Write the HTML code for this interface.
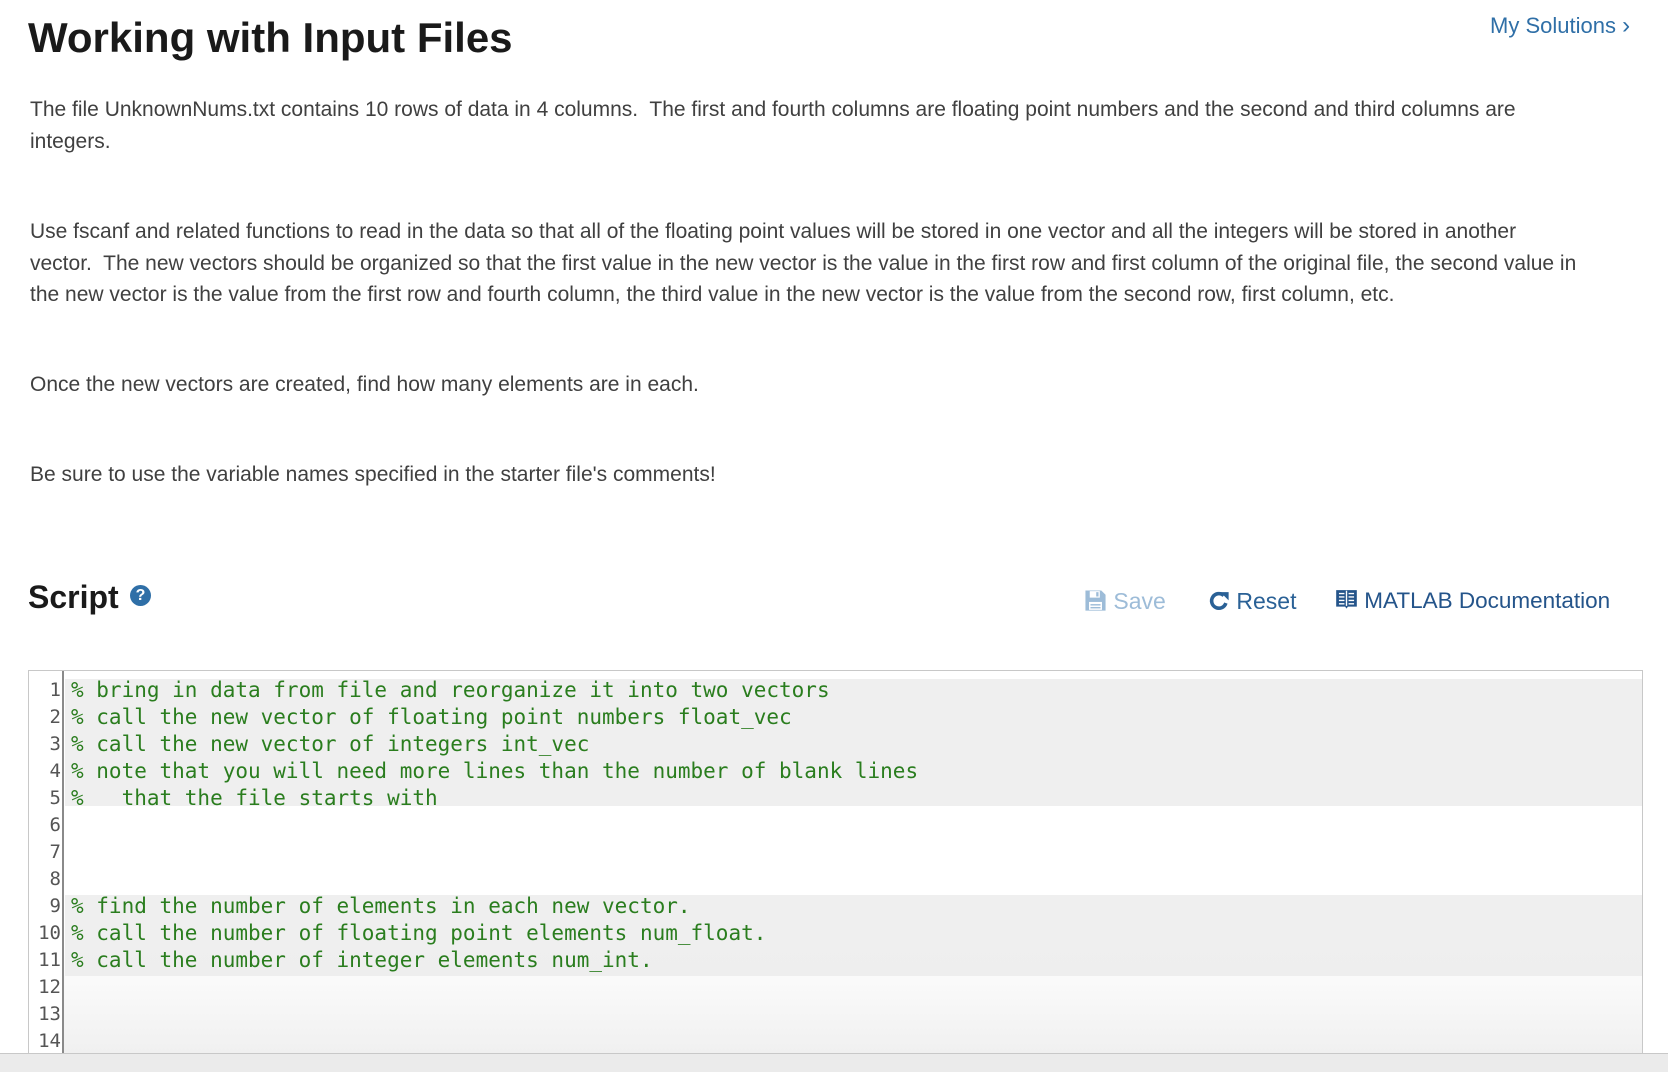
<!DOCTYPE html>
<html><head><meta charset="utf-8"><style>
*{margin:0;padding:0;box-sizing:border-box}
body{width:1668px;height:1072px;overflow:hidden;background:#fff;font-family:"Liberation Sans",Arial,sans-serif;position:relative}
.abs{position:absolute;white-space:nowrap}
h1{position:absolute;left:28px;top:12px;font-size:42px;font-weight:bold;color:#1a1a1a;line-height:52px}
.my{left:1490px;top:12px;font-size:22px;color:#2f6fa7}
.p{position:absolute;left:30px;font-size:21px;line-height:31.5px;color:#404040;white-space:nowrap}
.sc{left:28px;top:579px;font-size:32px;font-weight:bold;color:#1a1a1a}
.help{position:absolute;left:130px;top:585px;width:21px;height:21px;border-radius:50%;background:#2f6fa7;color:#fff;font-size:16px;font-weight:bold;text-align:center;line-height:21px}
.btn{top:588px;font-size:23px}
.ed{position:absolute;left:28px;top:670px;width:1615px;height:384px;border:1px solid #c8c8c8;border-bottom:none;overflow:hidden}
.gut{position:absolute;left:0;top:0;width:35px;height:100%;border-right:2px solid #8a8a8a;background:#fff}
.ln{position:absolute;right:3px;font-family:"DejaVu Sans Mono",monospace;color:#555;text-align:right}
.hl{position:absolute;left:36px;right:0;background:#efefef}
.code{position:absolute;left:42px;font-family:"DejaVu Sans Mono",monospace;font-size:21px;color:#2a7d1e;white-space:pre}
.fade{position:absolute;left:0;right:0;bottom:0;height:110px;background:linear-gradient(rgba(235,235,235,0),rgba(235,235,235,.75))}
.bot{position:absolute;left:0;top:1053px;width:1668px;height:19px;background:#ebebeb;border-top:1px solid #c8c8c8}
</style></head><body>
<h1>Working with Input Files</h1>
<div class="abs my">My Solutions <span style="font-size:24px">›</span></div>
<div class="p" style="top:94px">The file UnknownNums.txt contains 10 rows of data in 4 columns.&nbsp; The first and fourth columns are floating point numbers and the second and third columns are<br>integers.</div>
<div class="p" style="top:216px">Use fscanf and related functions to read in the data so that all of the floating point values will be stored in one vector and all the integers will be stored in another<br>vector.&nbsp; The new vectors should be organized so that the first value in the new vector is the value in the first row and first column of the original file, the second value in<br>the new vector is the value from the first row and fourth column, the third value in the new vector is the value from the second row, first column, etc.</div>
<div class="p" style="top:369px">Once the new vectors are created, find how many elements are in each.</div>
<div class="p" style="top:459px">Be sure to use the variable names specified in the starter file's comments!</div>
<div class="abs sc">Script</div>
<div class="help">?</div>
<div class="abs btn" style="left:1084px;color:#9dbcd8"><svg width="23" height="23" viewBox="0 0 16 16" style="vertical-align:-3px"><path d="M1 1h11l3 3v11H1z" fill="#9dbcd8"/><rect x="4" y="1.5" width="7" height="4.5" fill="#fff"/><rect x="8.5" y="2.2" width="1.6" height="3" fill="#9dbcd8"/><rect x="3.5" y="9" width="9" height="5.5" fill="#fff"/><rect x="4.5" y="10.5" width="7" height="1" fill="#9dbcd8"/><rect x="4.5" y="12.5" width="7" height="1" fill="#9dbcd8"/></svg> Save</div>
<div class="abs btn" style="left:1208px;color:#2a6196"><svg width="22" height="22" viewBox="0 0 16 16" style="vertical-align:-3px"><path d="M13 9.5A5.3 5.3 0 1 1 11.5 4" fill="none" stroke="#2a6196" stroke-width="2.6"/><path d="M9 1.5h6v6z" fill="#2a6196"/></svg> Reset</div>
<div class="abs btn" style="left:1335px;color:#24548a;font-size:22.5px"><svg width="23" height="22" viewBox="0 0 16 16" style="vertical-align:-2px"><path d="M0.5 1.5h15v12H9l-1 1.5-1-1.5H0.5z" fill="#24548a"/><g stroke="#fff" stroke-width="1"><path d="M2.5 4h4M2.5 6.5h4M2.5 9h4M2.5 11.5h4M9.5 4h4M9.5 6.5h4M9.5 9h4M9.5 11.5h4"/><path d="M8 2v11"/></g></svg> MATLAB Documentation</div>
<div class="ed">
<div class="hl" style="top:8px;height:127px"></div>
<div class="hl" style="top:224px;height:81px"></div>
<div class="fade"></div>
<div class="gut"></div>
<div class="ln" style="top:0;left:0;width:32px;line-height:27px;padding-top:6px;font-size:19px">1<br>2<br>3<br>4<br>5<br>6<br>7<br>8<br>9<br>10<br>11<br>12<br>13<br>14</div>
<div class="code" style="top:6px;line-height:27px">% bring in data from file and reorganize it into two vectors
% call the new vector of floating point numbers float_vec
% call the new vector of integers int_vec
% note that you will need more lines than the number of blank lines
%   that the file starts with



% find the number of elements in each new vector.
% call the number of floating point elements num_float.
% call the number of integer elements num_int.</div>
</div>
<div class="bot"></div>
</body></html>
